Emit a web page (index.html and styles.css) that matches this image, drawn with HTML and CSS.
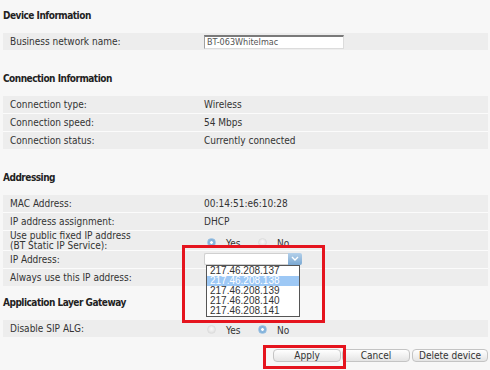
FILE: index.html
```html
<!DOCTYPE html>
<html>
<head>
<meta charset="utf-8">
<link rel="stylesheet" href="styles.css">
</head>
<body>
<div class="page">
  <section class="sec sec-first">
    <h2 class="sec-title">Device Information</h2>
    <div class="rows">
      <div class="row">
        <span class="lbl">Business network name:</span>
        <span class="val"><span class="text-input">BT-063WhiteImac</span></span>
      </div>
    </div>
  </section>

  <section class="sec">
    <h2 class="sec-title">Connection Information</h2>
    <div class="rows">
      <div class="row"><span class="lbl">Connection type:</span><span class="val">Wireless</span></div>
      <div class="row"><span class="lbl">Connection speed:</span><span class="val">54 Mbps</span></div>
      <div class="row"><span class="lbl">Connection status:</span><span class="val">Currently connected</span></div>
    </div>
  </section>

  <section class="sec">
    <h2 class="sec-title">Addressing</h2>
    <div class="rows">
      <div class="row"><span class="lbl">MAC Address:</span><span class="val">00:14:51:e6:10:28</span></div>
      <div class="row"><span class="lbl">IP address assignment:</span><span class="val">DHCP</span></div>
      <div class="row row-tall">
        <span class="lbl lbl-two">Use public fixed IP address<br>(BT Static IP Service):</span>
        <span class="val radios">
          <span class="radio on"></span><span class="radio-text">Yes</span>
          <span class="radio"></span><span class="radio-text">No</span>
        </span>
      </div>
      <div class="row">
        <span class="lbl">IP Address:</span>
        <span class="val">
          <span class="select">
            <span class="select-field"></span>
            <span class="select-btn"><svg width="8" height="5" viewBox="0 0 8 5"><path d="M1 1 L4 4 L7 1" fill="none" stroke="#fff" stroke-width="1.4"/></svg></span>
            <span class="listbox">
              <span class="opt">217.46.208.137</span>
              <span class="opt opt-sel">217.46.208.138</span>
              <span class="opt">217.46.208.139</span>
              <span class="opt">217.46.208.140</span>
              <span class="opt">217.46.208.141</span>
            </span>
          </span>
        </span>
      </div>
      <div class="row"><span class="lbl">Always use this IP address:</span><span class="val"></span></div>
    </div>
  </section>

  <section class="sec sec-tight">
    <h2 class="sec-title">Application Layer Gateway</h2>
    <div class="rows">
      <div class="row">
        <span class="lbl">Disable SIP ALG:</span>
        <span class="val radios">
          <span class="radio"></span><span class="radio-text">Yes</span>
          <span class="radio on"></span><span class="radio-text">No</span>
        </span>
      </div>
    </div>
  </section>

  <div class="actions">
    <button class="btn btn-apply">Apply</button>
    <button class="btn btn-cancel">Cancel</button>
    <button class="btn btn-delete">Delete device</button>
  </div>

  <div class="mark mark-ip"></div>
  <div class="mark mark-apply"></div>
</div>
</body>
</html>
```

FILE: styles.css
```css
* { box-sizing: border-box; }
html, body {
  margin: 0;
  padding: 0;
  background: #f7f7f7;
}
body {
  font-family: "DejaVu Sans Condensed", "DejaVu Sans", sans-serif;
  font-size: 10px;
  color: #333;
}
.page {
  position: relative;
  width: 490px;
  height: 370px;
  padding: 7px 2px 0 3px;
  overflow: hidden;
}
.sec { margin-top: 20px; }
.sec-first { margin-top: 0; }
.sec-tight { margin-top: 8px; }
.sec-title {
  margin: 0 0 9px 0;
  height: 17px;
  line-height: 17px;
  font-size: 10px;
  font-weight: bold;
  letter-spacing: -0.5px;
  color: #222;
}
.rows {
  display: flex;
  flex-direction: column;
  gap: 1px;
  background: #fbfbfb;
}
.row {
  display: grid;
  grid-template-columns: 201px 1fr;
  height: 17px;
  align-items: center;
  background: #ededed;
}
.row-tall { height: 19px; }
.lbl {
  padding-left: 7px;
  line-height: 17px;
  white-space: nowrap;
}
.lbl-two { line-height: 10px; padding-top: 0; }
.val {
  line-height: 17px;
  position: relative;
  height: 100%;
  display: flex;
  align-items: center;
}
.text-input {
  display: block;
  width: 140px;
  height: 14px;
  background: #fff;
  border-top: 2px solid #7a7a7a;
  border-left: 1px solid #a0a0a0;
  border-right: 1px solid #dcdcdc;
  border-bottom: 1px solid #dcdcdc;
  font-size: 9px;
  line-height: 11px;
  padding-left: 2px;
  color: #555;
}
.radios { gap: 0; }
.radio {
  width: 9px;
  height: 9px;
  border-radius: 50%;
  margin-left: 3px;
  background: radial-gradient(circle at 50% 40%, #fafafa 0, #e6e6e6 60%, #d4d4d4 100%);
  border: 1px solid #dedede;
  position: relative;
  top: 1px;
}
.radio.on {
  background: radial-gradient(circle, #ffffff 0, #ffffff 22%, #8fbbe0 32%, #6fa3d3 100%);
  border: 1px solid #9ec3e3;
}
.radio-text {
  margin-left: 10px;
  width: 20px;
  line-height: 17px;
  position: relative;
  top: 2px;
}
.radios .radio + .radio-text + .radio { margin-left: 12px; }
.radio-text:last-child { margin-left: 10px; }
.select {
  position: relative;
  display: flex;
  width: 98px;
  height: 12px;
  margin-top: -2px;
}
.select-field {
  flex: 1;
  background: #fff;
  border: 1px solid #d0d0d0;
  border-right: none;
  border-radius: 2px 0 0 2px;
}
.select-btn {
  width: 14px;
  height: 12px;
  border-radius: 0 2px 2px 0;
  background: linear-gradient(#b4d0ea, #7aa8d2);
  display: flex;
  align-items: center;
  justify-content: center;
}
.listbox {
  position: absolute;
  left: 2px;
  top: 12px;
  width: 94px;
  display: flex;
  flex-direction: column;
  background: #fff;
  border: 1px solid #555;
  z-index: 2;
}
.opt {
  font-family: "Liberation Sans", Arial, sans-serif;
  font-size: 10px;
  line-height: 10px;
  height: 10px;
  padding-left: 3px;
  color: #333;
}
.opt-sel {
  background: #9dc8f5;
  color: #fff;
}
.actions {
  display: flex;
  justify-content: flex-end;
  gap: 1px;
  margin-top: 12px;
  padding-right: 0;
}
.btn {
  height: 13px;
  padding: 0;
  border: 1px solid #c4c4c4;
  border-radius: 4px;
  background: linear-gradient(#ffffff, #e4e4e4);
  font-family: "DejaVu Sans Condensed", "DejaVu Sans", sans-serif;
  font-size: 10px;
  line-height: 11px;
  color: #333;
}
.btn-apply { width: 68px; }
.btn-cancel { width: 68px; }
.btn-delete { width: 76px; margin-left: 1px; }
.mark {
  position: absolute;
  border: 3px solid #e5141e;
  z-index: 3;
}
.mark-ip {
  left: 182px;
  top: 245px;
  width: 143px;
  height: 78px;
}
.mark-apply {
  left: 263px;
  top: 345px;
  width: 83px;
  height: 24px;
}
```
